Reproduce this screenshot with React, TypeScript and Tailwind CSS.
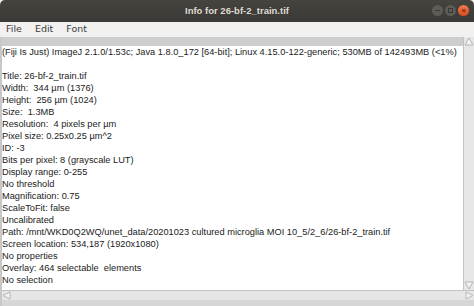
import React from "react";

const lines: string[] = [
  "(Fiji Is Just) ImageJ 2.1.0/1.53c; Java 1.8.0_172 [64-bit]; Linux 4.15.0-122-generic; 530MB of 142493MB (<1%)",
  "",
  "Title: 26-bf-2_train.tif",
  "Width:  344 µm (1376)",
  "Height:  256 µm (1024)",
  "Size:  1.3MB",
  "Resolution:  4 pixels per µm",
  "Pixel size: 0.25x0.25 µm^2",
  "ID: -3",
  "Bits per pixel: 8 (grayscale LUT)",
  "Display range: 0-255",
  "No threshold",
  "Magnification: 0.75",
  "ScaleToFit: false",
  "Uncalibrated",
  "Path: /mnt/WKD0Q2WQ/unet_data/20201023 cultured microglia MOI 10_5/2_6/26-bf-2_train.tif",
  "Screen location: 534,187 (1920x1080)",
  "No properties",
  "Overlay: 464 selectable  elements",
  "No selection",
];

const App: React.FC = () => {
  return (
    <div className="w-[474px] h-[306px] overflow-hidden bg-[#f2f1f0] flex flex-col font-['Liberation_Sans',sans-serif]">
      {/* title bar */}
      <div className="relative h-[22px] shrink-0 rounded-t-[5px] bg-gradient-to-b from-[#45443f] to-[#3a3935] flex items-center justify-center">
        <span className="text-[9.5px] font-bold text-[#dfdbd2]">Info for 26-bf-2_train.tif</span>
        <div className="absolute right-[5px] top-[5px] flex gap-[2px]">
          <div className="w-[11px] h-[11px] rounded-full bg-[#5d5c57] flex items-center justify-center">
            <div className="w-[5px] h-[1px] bg-[#3a3935]" />
          </div>
          <div className="w-[11px] h-[11px] rounded-full bg-[#5d5c57] flex items-center justify-center">
            <div className="w-[5px] h-[5px] border border-[#3a3935]" />
          </div>
          <div className="w-[11px] h-[11px] rounded-full bg-gradient-to-b from-[#f27a4e] to-[#db4a1d] flex items-center justify-center text-[8px] leading-none text-[#6b2a12] font-bold">
            ×
          </div>
        </div>
      </div>

      {/* menu bar */}
      <div className="h-[15px] shrink-0 flex items-center gap-[13px] pl-[6px] text-[9.5px] text-[#3c3c3c] bg-[#f2f1f0] font-['DejaVu_Sans',sans-serif]">
        <span>File</span>
        <span>Edit</span>
        <span>Font</span>
      </div>

      {/* text panel */}
      <div className="flex-1 flex flex-col border-l-2 border-[#c8c8c8] min-h-0">
        <div className="flex flex-1 min-h-0">
          <div className="flex-1 flex flex-col bg-white min-w-0">
            <div className="h-[9px] shrink-0 bg-[#cdcdcd]" />
            <div className="flex-1 text-[9.25px] leading-[12px] text-[#222] whitespace-pre overflow-hidden">
              {lines.map((l, i) => (
                <div key={i} className="h-[12px]">{l}</div>
              ))}
            </div>
          </div>
          {/* vertical scrollbar */}
          <div className="w-[11px] shrink-0 bg-[#e6e6e6] border-l border-[#c2c2c2] flex flex-col justify-between">
            <svg width="10" height="9" viewBox="0 0 10 9">
              <path d="M1 8 L5 1 L9 8 Z" fill="#f4f4f4" stroke="#b5b5b5" />
            </svg>
            <svg width="10" height="9" viewBox="0 0 10 9">
              <path d="M1 1 L5 8 L9 1 Z" fill="#f4f4f4" stroke="#b5b5b5" />
            </svg>
          </div>
        </div>
        {/* horizontal scrollbar */}
        <div className="h-[10px] shrink-0 flex bg-[#e6e6e6] border-t border-[#c2c2c2]">
          <svg width="10" height="9" viewBox="0 0 10 9">
            <path d="M8 1 L1 4.5 L8 8 Z" fill="#f4f4f4" stroke="#b5b5b5" />
          </svg>
          <div className="flex-1" />
          <svg width="10" height="9" viewBox="0 0 10 9">
            <path d="M2 1 L9 4.5 L2 8 Z" fill="#f4f4f4" stroke="#b5b5b5" />
          </svg>
        </div>
        <div className="h-[6px] shrink-0 bg-[#d6d6d6]" />
      </div>
    </div>
  );
};

export default App;
